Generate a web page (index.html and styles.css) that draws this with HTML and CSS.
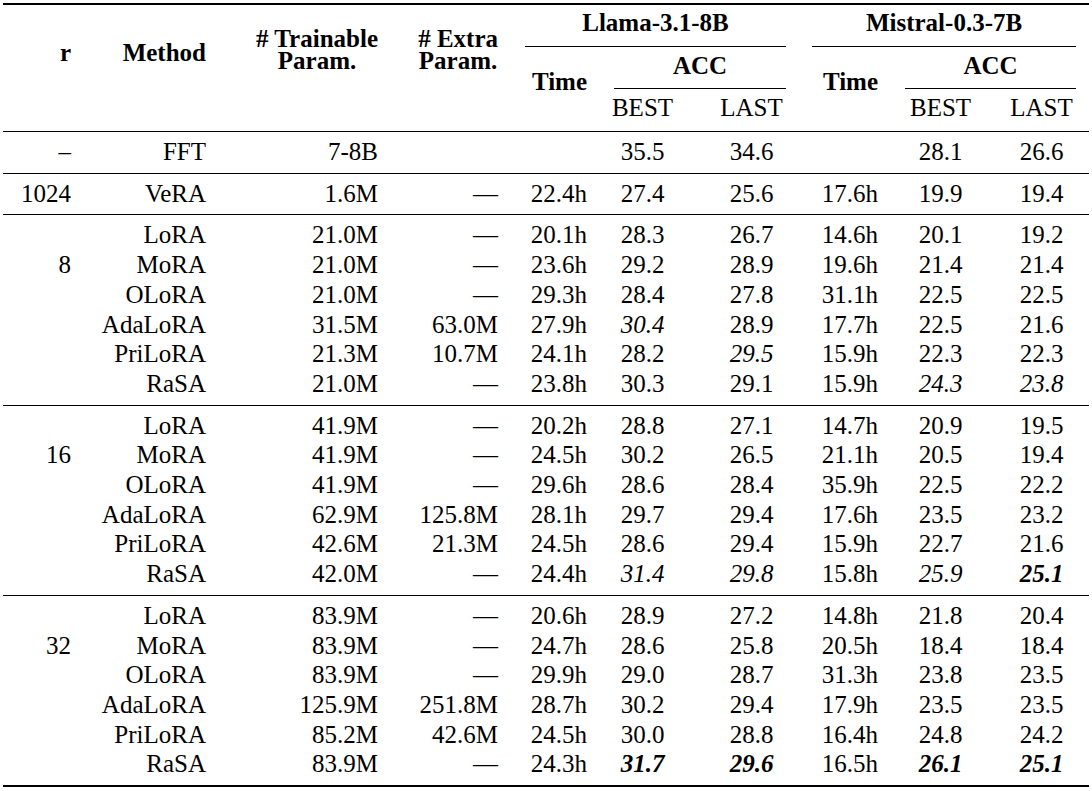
FILE: index.html
```html
<!DOCTYPE html>
<html lang="en">
<head>
<meta charset="utf-8">
<title>Results table</title>
<link rel="stylesheet" href="styles.css">
</head>
<body>
<div class="wrap">
<table class="res">
  <colgroup>
    <col class="c1"><col class="c2"><col class="c3"><col class="c4"><col class="c5">
    <col class="c6"><col class="c7"><col class="c8"><col class="c9"><col class="c10">
  </colgroup>
  <thead>
    <tr>
      <th rowspan="3" class="hr">r</th>
      <th rowspan="3" class="hr">Method</th>
      <th rowspan="3" class="hp"><div class="stack"><span class="ln"># Trainable</span><span class="ln">Param.</span></div></th>
      <th rowspan="3" class="hp"><div class="stack"><span class="ln"># Extra</span><span class="ln">Param.</span></div></th>
      <th colspan="3" class="grp g1"><div class="cm">Llama-3.1-8B</div></th>
      <th colspan="3" class="grp g1"><div class="cm">Mistral-0.3-7B</div></th>
    </tr>
    <tr>
      <th rowspan="2" class="ht">Time</th>
      <th colspan="2" class="grp g2"><div class="cm">ACC</div></th>
      <th rowspan="2" class="ht">Time</th>
      <th colspan="2" class="grp g2"><div class="cm">ACC</div></th>
    </tr>
    <tr>
      <th class="sub s6">BEST</th>
      <th class="sub s7">LAST</th>
      <th class="sub s9">BEST</th>
      <th class="sub s10">LAST</th>
    </tr>
  </thead>
  <tbody class="g">
    <tr><td>–</td><td>FFT</td><td>7-8B</td><td></td><td></td><td>35.5</td><td>34.6</td><td></td><td>28.1</td><td>26.6</td></tr>
  </tbody>
  <tbody class="g">
    <tr><td>1024</td><td>VeRA</td><td>1.6M</td><td>—</td><td>22.4h</td><td>27.4</td><td>25.6</td><td>17.6h</td><td>19.9</td><td>19.4</td></tr>
  </tbody>
  <tbody class="g">
    <tr><td></td><td>LoRA</td><td>21.0M</td><td>—</td><td>20.1h</td><td>28.3</td><td>26.7</td><td>14.6h</td><td>20.1</td><td>19.2</td></tr>
    <tr><td>8</td><td>MoRA</td><td>21.0M</td><td>—</td><td>23.6h</td><td>29.2</td><td>28.9</td><td>19.6h</td><td>21.4</td><td>21.4</td></tr>
    <tr><td></td><td>OLoRA</td><td>21.0M</td><td>—</td><td>29.3h</td><td>28.4</td><td>27.8</td><td>31.1h</td><td>22.5</td><td>22.5</td></tr>
    <tr><td></td><td>AdaLoRA</td><td>31.5M</td><td>63.0M</td><td>27.9h</td><td class="it">30.4</td><td>28.9</td><td>17.7h</td><td>22.5</td><td>21.6</td></tr>
    <tr><td></td><td>PriLoRA</td><td>21.3M</td><td>10.7M</td><td>24.1h</td><td>28.2</td><td class="it">29.5</td><td>15.9h</td><td>22.3</td><td>22.3</td></tr>
    <tr><td></td><td>RaSA</td><td>21.0M</td><td>—</td><td>23.8h</td><td>30.3</td><td>29.1</td><td>15.9h</td><td class="it">24.3</td><td class="it">23.8</td></tr>
  </tbody>
  <tbody class="g">
    <tr><td></td><td>LoRA</td><td>41.9M</td><td>—</td><td>20.2h</td><td>28.8</td><td>27.1</td><td>14.7h</td><td>20.9</td><td>19.5</td></tr>
    <tr><td>16</td><td>MoRA</td><td>41.9M</td><td>—</td><td>24.5h</td><td>30.2</td><td>26.5</td><td>21.1h</td><td>20.5</td><td>19.4</td></tr>
    <tr><td></td><td>OLoRA</td><td>41.9M</td><td>—</td><td>29.6h</td><td>28.6</td><td>28.4</td><td>35.9h</td><td>22.5</td><td>22.2</td></tr>
    <tr><td></td><td>AdaLoRA</td><td>62.9M</td><td>125.8M</td><td>28.1h</td><td>29.7</td><td>29.4</td><td>17.6h</td><td>23.5</td><td>23.2</td></tr>
    <tr><td></td><td>PriLoRA</td><td>42.6M</td><td>21.3M</td><td>24.5h</td><td>28.6</td><td>29.4</td><td>15.9h</td><td>22.7</td><td>21.6</td></tr>
    <tr><td></td><td>RaSA</td><td>42.0M</td><td>—</td><td>24.4h</td><td class="it">31.4</td><td class="it">29.8</td><td>15.8h</td><td class="it">25.9</td><td class="bi">25.1</td></tr>
  </tbody>
  <tbody class="g">
    <tr><td></td><td>LoRA</td><td>83.9M</td><td>—</td><td>20.6h</td><td>28.9</td><td>27.2</td><td>14.8h</td><td>21.8</td><td>20.4</td></tr>
    <tr><td>32</td><td>MoRA</td><td>83.9M</td><td>—</td><td>24.7h</td><td>28.6</td><td>25.8</td><td>20.5h</td><td>18.4</td><td>18.4</td></tr>
    <tr><td></td><td>OLoRA</td><td>83.9M</td><td>—</td><td>29.9h</td><td>29.0</td><td>28.7</td><td>31.3h</td><td>23.8</td><td>23.5</td></tr>
    <tr><td></td><td>AdaLoRA</td><td>125.9M</td><td>251.8M</td><td>28.7h</td><td>30.2</td><td>29.4</td><td>17.9h</td><td>23.5</td><td>23.5</td></tr>
    <tr><td></td><td>PriLoRA</td><td>85.2M</td><td>42.6M</td><td>24.5h</td><td>30.0</td><td>28.8</td><td>16.4h</td><td>24.8</td><td>24.2</td></tr>
    <tr><td></td><td>RaSA</td><td>83.9M</td><td>—</td><td>24.3h</td><td class="bi">31.7</td><td class="bi">29.6</td><td>16.5h</td><td class="bi">26.1</td><td class="bi">25.1</td></tr>
  </tbody>
</table>
</div>
</body>
</html>
```
FILE: styles.css
```css
html, body {
  margin: 0;
  padding: 0;
  background: #ffffff;
}

body {
  font-family: "Liberation Serif", "Times New Roman", serif;
  color: #000000;
}

.wrap {
  padding: 3px 0 0 3px;
}

.res {
  width: 1086px;
  table-layout: fixed;
  border-collapse: separate;
  border-spacing: 0;
  font-size: 25px;
  border-top: 2px solid #000;
  border-bottom: 2px solid #000;
}

.c1 { width: 82px; }
.c2 { width: 135px; }
.c3 { width: 172px; }
.c4 { width: 120px; }
.c5 { width: 89px; }
.c6 { width: 99px; }
.c7 { width: 99px; }
.c8 { width: 93px; }
.c9 { width: 98px; }
.c10 { width: 99px; }

th, td {
  padding: 0 14px;
  white-space: nowrap;
}

th {
  font-weight: bold;
  line-height: 30px;
}

/* rowspan header cells */
.hr {
  text-align: right;
  vertical-align: top;
  padding-top: 33px;
}

.hp {
  vertical-align: top;
  padding-top: 23px;
}

.stack {
  display: flex;
  flex-direction: column;
  align-items: center;
  width: fit-content;
  margin-left: auto;
  line-height: 21.5px;
}

.ln {
  display: block;
}

.ht {
  text-align: right;
  vertical-align: top;
  padding-top: 20px;
}

/* cmidrule groups */
.grp {
  padding: 0;
  text-align: center;
  vertical-align: top;
}

.cm {
  margin: 0 13px;
  border-bottom: 1px solid #000;
}

.g1 .cm {
  padding: 3px 0 8px;
}

.g2 .cm {
  padding: 4px 0 7px;
}

.sub {
  font-weight: normal;
  text-align: center;
  padding-top: 4px;
  padding-bottom: 8px;
}

/* body */
td {
  line-height: 29.7px;
  text-align: right;
}

td:nth-child(6),
td:nth-child(7),
td:nth-child(9),
td:nth-child(10) {
  text-align: center;
}

/* nudge centred value columns */
td:nth-child(6), .s6 { padding-left: 0; padding-right: 16px; }
td:nth-child(7), .s7 { padding-left: 4px; padding-right: 0; }
td:nth-child(9), .s9 { padding-left: 0; padding-right: 1px; }
td:nth-child(10), .s10 { padding-left: 4px; padding-right: 0; }

.g tr:first-child td {
  border-top: 1px solid #000;
  padding-top: 5px;
}

.g tr:last-child td {
  padding-bottom: 6px;
}

.it {
  font-style: italic;
}

.bi {
  font-style: italic;
  font-weight: bold;
}
```
